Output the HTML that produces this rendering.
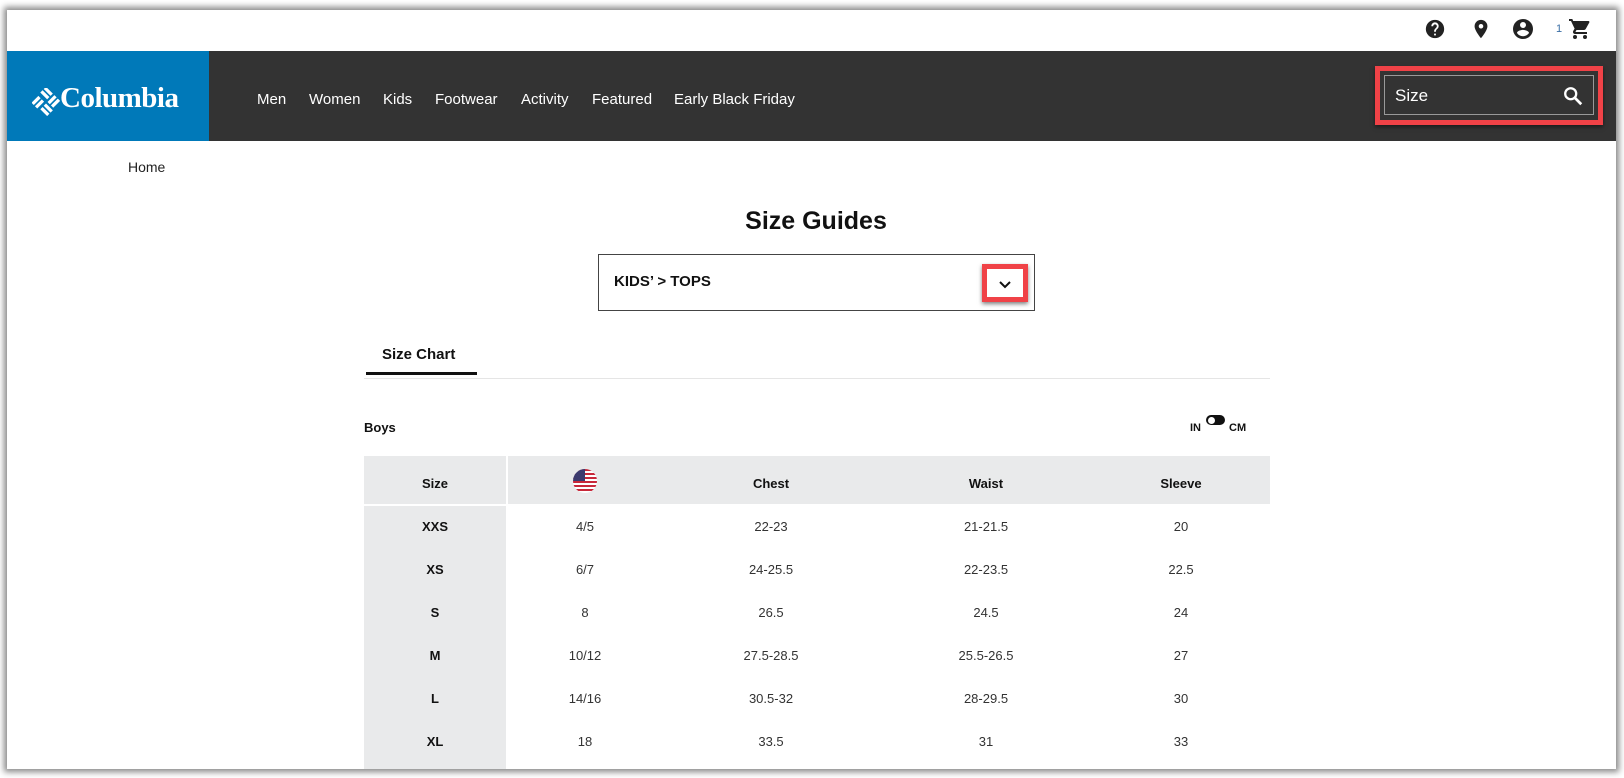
<!DOCTYPE html>
<html><head><meta charset="utf-8"><style>
*{margin:0;padding:0;box-sizing:border-box}
body{width:1624px;height:778px;background:#fff;position:relative;overflow:hidden;font-family:"Liberation Sans",sans-serif;color:#111}
.frame{position:absolute;left:7px;top:10px;width:1609px;height:759px;background:#fff;box-shadow:0 0 6px 3px #888;overflow:hidden}
.a{position:absolute}
.nav{left:0;top:41px;width:1609px;height:90px;background:#333}
.logo{left:0;top:41px;width:202px;height:90px;background:#0079b9}
.nv{color:#fff;font-size:15px;top:81px}
.cell{position:absolute;text-align:center;font-size:13px;color:#333}
.hd{font-weight:bold;color:#111}
</style></head><body>
<div class="frame">
 <div class="a" style="left:1417px;top:8px;"><svg width="22" height="22" viewBox="0 0 24 24"><path fill="#222" d="M12 2a10 10 0 1 0 0 20 10 10 0 0 0 0-20zm1 17h-2v-2h2zm2.1-7.7-.9.9C13.5 12.9 13 13.5 13 15h-2v-.5c0-1.1.5-2.1 1.2-2.8l1.2-1.3A2 2 0 1 0 10 9H8a4 4 0 1 1 7.1 2.3z"/></svg></div>
 <div class="a" style="left:1463px;top:8px;"><svg width="22" height="22" viewBox="0 0 24 24"><path fill="#222" d="M12 2a7 7 0 0 0-7 7c0 5 7 13 7 13s7-8 7-13a7 7 0 0 0-7-7zm0 9.5a2.5 2.5 0 1 1 0-5 2.5 2.5 0 0 1 0 5z"/></svg></div>
 <div class="a" style="left:1504px;top:7px;"><svg width="24" height="24" viewBox="0 0 24 24"><path fill="#222" d="M12 2a10 10 0 1 0 0 20 10 10 0 0 0 0-20zm0 3a3 3 0 1 1 0 6 3 3 0 0 1 0-6zm0 14.2a7.2 7.2 0 0 1-6-3.2c0-2 4-3.1 6-3.1s6 1.1 6 3.1a7.2 7.2 0 0 1-6 3.2z"/></svg></div>
 <div class="a" style="left:1549px;top:13px;font-size:11px;color:#3a6ea5">1</div>
 <div class="a" style="left:1561px;top:7px;"><svg width="24" height="24" viewBox="0 0 24 24"><path fill="#222" d="M7 18a2 2 0 1 0 0 4 2 2 0 0 0 0-4zM1 2v2h2l3.6 7.6-1.4 2.4A2 2 0 0 0 7 17h12v-2H7.4l1.1-2h7.5a2 2 0 0 0 1.7-1l3.6-6.5A1 1 0 0 0 20.4 4H5.2l-.9-2zm16 16a2 2 0 1 0 0 4 2 2 0 0 0 0-4z"/></svg></div>
 <div class="a nav"></div>
 <div class="a logo"></div>
 <div class="a" style="left:25px;top:78px;"><svg width="28" height="28" viewBox="0 0 26 26" fill="#fff"><g transform="rotate(45 13 13)"><rect x="3" y="3" width="9" height="3"/><rect x="3" y="7.5" width="9" height="3"/><rect x="14" y="3" width="3" height="9"/><rect x="18.5" y="3" width="3" height="9"/><rect x="14" y="14" width="9" height="3"/><rect x="14" y="18.5" width="9" height="3"/><rect x="4" y="14" width="3" height="9"/><rect x="8.5" y="14" width="3" height="9"/></g></svg></div>
 <div class="a" style="left:53px;top:72px;color:#fff;font-family:'Liberation Serif',serif;font-size:29px;font-weight:bold;letter-spacing:-0.5px">Columbia</div>
 <div class="a nv" style="left:250px">Men</div>
 <div class="a nv" style="left:302px">Women</div>
 <div class="a nv" style="left:376px">Kids</div>
 <div class="a nv" style="left:428px">Footwear</div>
 <div class="a nv" style="left:514px">Activity</div>
 <div class="a nv" style="left:585px">Featured</div>
 <div class="a nv" style="left:667px">Early Black Friday</div>
 <div class="a" style="left:1368px;top:56px;width:228px;height:59px;border:5px solid #f04247;box-shadow:0 2px 4px rgba(0,0,0,.5)"></div>
 <div class="a" style="left:1377px;top:65px;width:210px;height:40px;border:1px solid #999"></div>
 <div class="a" style="left:1388px;top:76px;color:#fff;font-size:17px">Size</div>
 <div class="a" style="left:1555px;top:75px;"><svg width="22" height="22" viewBox="0 0 24 24"><circle cx="9.5" cy="9.5" r="6" fill="none" stroke="#fff" stroke-width="2.5"/><path d="M14 14l7 7" stroke="#fff" stroke-width="3"/></svg></div>
 <div class="a" style="left:121px;top:149px;font-size:14px;color:#222">Home</div>
 <div class="a" style="left:0;width:1618px;top:197px;text-align:center;font-size:25px;font-weight:bold;color:#111">Size Guides</div>
 <div class="a" style="left:591px;top:244px;width:437px;height:57px;border:1px solid #444"></div>
 <div class="a" style="left:607px;top:263px;font-size:15px;font-weight:bold">KIDS’ &gt; TOPS</div>
 <div class="a" style="left:975px;top:254px;width:46px;height:38px;border:5px solid #f04247;box-shadow:0 2px 4px rgba(0,0,0,.5)"></div>
 <div class="a" style="left:991px;top:267px;"><svg width="14" height="10" viewBox="0 0 14 10"><path d="M2 2l5 5 5-5" fill="none" stroke="#111" stroke-width="2"/></svg></div>
 <div class="a" style="left:375px;top:336px;font-size:15px;font-weight:bold">Size Chart</div>
 <div class="a" style="left:359px;top:362px;width:111px;height:3px;background:#111"></div>
 <div class="a" style="left:357px;top:368px;width:906px;height:1px;background:#e5e5e5"></div>
 <div class="a" style="left:357px;top:410px;font-size:13px;font-weight:bold">Boys</div>
 <div class="a" style="left:1183px;top:412px;font-size:11px;font-weight:bold">IN</div>
 <div class="a" style="left:1199px;top:405px;width:19px;height:10px;border-radius:5px;background:#111"><div style="width:7px;height:7px;border-radius:4px;background:#fff;margin:1.5px 0 0 2px"></div></div>
 <div class="a" style="left:1222px;top:412px;font-size:11px;font-weight:bold">CM</div>
 <div class="a" style="left:357px;top:446px;width:906px;height:48px;background:#e9eaeb"></div>
 <div class="a" style="left:357px;top:446px;width:142px;height:313px;background:#e9eaeb"></div>
 <div class="a" style="left:499px;top:446px;width:2px;height:48px;background:#fff"></div>
 <div class="a" style="left:357px;top:494px;width:142px;height:2px;background:#fff"></div>
 <div class="a" style="left:566px;top:459px;width:24px;height:24px;border-radius:50%;overflow:hidden;background:repeating-linear-gradient(#c8283a 0 2px,#fff 2px 4px)"><div style="width:12px;height:12px;background:#3c3b6e"></div></div>
 <div id="t"></div>
</div>
<script>
var cx=[428,578,764,979,1174];
var rows=[["Size","","Chest","Waist","Sleeve"],["XXS","4/5","22-23","21-21.5","20"],["XS","6/7","24-25.5","22-23.5","22.5"],["S","8","26.5","24.5","24"],["M","10/12","27.5-28.5","25.5-26.5","27"],["L","14/16","30.5-32","28-29.5","30"],["XL","18","33.5","31","33"]];
var ys=[466,509,552,595,638,681,724];var h="";
rows.forEach(function(r,i){r.forEach(function(c,j){if(!c)return;var b=(i==0||j==0);h+='<div class="cell'+(b?' hd':'')+'" style="left:'+(cx[j]-80)+'px;width:160px;top:'+ys[i]+'px">'+c+'</div>';});});
document.getElementById('t').outerHTML=h;
</script>
</body></html>
